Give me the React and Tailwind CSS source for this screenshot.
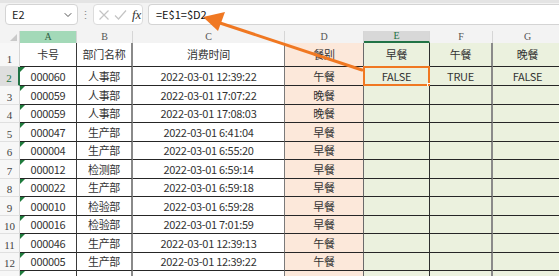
import { ChevronDown } from 'lucide-react';

const cols = [
  { key: 'a', w: 57, line: 'border-r border-r-[#3a3a3a]', bg: 'bg-white' },
  { key: 'b', w: 56, line: 'border-r-2 border-r-[#8a8a8a]', bg: 'bg-white' },
  { key: 'c', w: 152, line: 'border-r border-r-[#7a7a7a]', bg: 'bg-white' },
  { key: 'd', w: 79, line: 'border-r border-r-[#6a6a6a]', bg: 'bg-[#fce8da]' },
  { key: 'e', w: 66, line: 'border-r border-r-[#2e2e2e]', bg: 'bg-[#ebf1de]' },
  { key: 'f', w: 63, line: 'border-r-2 border-r-[#8a8a8a]', bg: 'bg-[#ebf1de]' },
  { key: 'g', w: 70, line: 'border-r border-r-[#8a8a8a]', bg: 'bg-[#ebf1de]' },
];

const letters = ['A', 'B', 'C', 'D', 'E', 'F', 'G'];

const head = ['卡号', '部门名称', '消费时间', '餐别', '早餐', '午餐', '晚餐'];

const rows = [
  ['000060', '人事部', '2022-03-01 12:39:22', '午餐', 'FALSE', 'TRUE', 'FALSE'],
  ['000059', '人事部', '2022-03-01 17:07:22', '晚餐', '', '', ''],
  ['000059', '人事部', '2022-03-01 17:08:03', '晚餐', '', '', ''],
  ['000047', '生产部', '2022-03-01 6:41:04', '早餐', '', '', ''],
  ['000004', '生产部', '2022-03-01 6:55:20', '早餐', '', '', ''],
  ['000012', '检测部', '2022-03-01 6:59:14', '早餐', '', '', ''],
  ['000022', '生产部', '2022-03-01 6:59:18', '早餐', '', '', ''],
  ['000010', '检验部', '2022-03-01 6:59:28', '早餐', '', '', ''],
  ['000016', '检验部', '2022-03-01 7:01:59', '早餐', '', '', ''],
  ['000046', '生产部', '2022-03-01 12:39:13', '午餐', '', '', ''],
  ['000005', '生产部', '2022-03-01 12:39:22', '午餐', '', '', ''],
  ['', '', '', '', '', '', ''],
];

const heights = [19, 19, 18, 19, 18, 19, 18, 19, 18, 19, 18, 19];

function Toolbar() {
  return (
    <div className="h-[31px] bg-[#f3f3f3] border-t-[3px] border-t-[#e4e4e4] flex items-start pt-[1px]">
      <div className="ml-[5px] w-[73px] h-[21px] bg-white border border-[#d4d4d4] rounded-[4px] flex items-center justify-between pl-[6px] pr-[3px]">
        <span className="text-[11px] text-[#222]">E2</span>
        <ChevronDown className="w-[12px] h-[12px] text-[#555]" strokeWidth={2} />
      </div>
      <div className="w-[15px] h-[21px] flex items-center justify-center text-[#8a8a8a] text-[11px]">⋮</div>
      <div className="w-[50px] h-[21px] bg-white border border-[#dcdcdc] rounded-[4px] flex items-center gap-[4px] pl-[4px]">
        <svg width="12" height="12" viewBox="0 0 12 12" className="text-[#c4c4c4]">
          <path d="M1.5 1.5 L10.5 10.5 M10.5 1.5 L1.5 10.5" stroke="currentColor" strokeWidth="1.2" fill="none" />
        </svg>
        <svg width="13" height="12" viewBox="0 0 13 12" className="text-[#c4c4c4]">
          <path d="M1 6.5 L4.5 10 L12 1.5" stroke="currentColor" strokeWidth="1.2" fill="none" />
        </svg>
        <span className="ml-[1px] text-[13px] italic text-[#333] leading-none" style={{ fontFamily: '"Liberation Serif", serif' }}>
          fx
        </span>
      </div>
      <div className="ml-[5px] flex-1 h-[21px] bg-white border border-[#d4d4d4] border-r-0 rounded-l-[4px] flex items-center pl-[7px]">
        <span className="text-[11px] text-[#111]">=E$1=$D2</span>
      </div>
    </div>
  );
}

function ColumnHeader() {
  return (
    <div className="flex h-[12px] bg-[#f3f3f3]">
      <div className="w-[20px] shrink-0 border-r border-[#d6d6d6] relative">
        <div className="absolute right-[2px] bottom-[2px] w-0 h-0 border-l-[7px] border-l-transparent border-b-[7px] border-b-[#c9c9c9]" />
      </div>
      {cols.map((c, i) => (
        <div
          key={c.key}
          style={{ width: c.w }}
          className={
            'shrink-0 flex items-center justify-center text-[10px] leading-none border-r border-[#d6d6d6] ' +
            (i === 0
              ? 'bg-[#a3d9b8] text-[#2f5f43]'
              : i === 4
              ? 'bg-[#d8d8d8] text-[#217346] border-b-2 border-b-[#217346]'
              : 'text-[#555]')
          }
        >
          <span style={{ fontFamily: '"Liberation Serif", serif' }}>{letters[i]}</span>
        </div>
      ))}
    </div>
  );
}

function Row({ num, h, cells, isHead, showNum = true }) {
  const active = num === 2;
  return (
    <div className="flex" style={{ height: h }}>
      <div
        className={
          'w-[20px] shrink-0 flex items-end justify-center pb-[1px] text-[11px] leading-none border-b border-[#e0e0e0] ' +
          (active ? 'bg-[#dedede] text-[#217346] border-r-2 border-r-[#217346]' : 'bg-[#f7f7f7] text-[#444] border-r border-r-[#d6d6d6]')
        }
        style={{ fontFamily: '"Liberation Serif", serif' }}
      >
        {showNum ? num : null}
      </div>
      {cols.map((c, i) => (
        <div
          key={c.key}
          style={{ width: c.w }}
          className={
            'shrink-0 relative flex items-center justify-center text-[11px] text-[#333] tracking-[-0.3px] border-b border-b-[#262626] ' +
            c.line +
            ' ' +
            c.bg
          }
        >
          {i === 0 && !isHead && (
            <div className="absolute left-0 top-0 w-0 h-0 border-t-[5px] border-t-[#1e7b3c] border-r-[5px] border-r-transparent" />
          )}
          {cells[i]}
          {active && i === 4 && (
            <div className="absolute left-[-1px] top-[-1px] right-[-1px] bottom-[-1px] border-2 border-[#f07822]">
              <div className="absolute right-[-4px] bottom-[-4px] w-[5px] h-[5px] bg-[#f07822] border border-white" />
            </div>
          )}
        </div>
      ))}
    </div>
  );
}

export default function App() {
  return (
    <div
      className="relative w-[559px] h-[276px] overflow-hidden bg-white"
      style={{ fontFamily: '"Noto Sans CJK SC", "Noto Sans", sans-serif' }}
    >
      <Toolbar />
      <ColumnHeader />
      <Row num={1} h={24} cells={head} isHead />
      {rows.map((r, i) => (
        <Row key={i} num={i + 2} h={heights[i]} cells={r} showNum={i < rows.length - 1} />
      ))}
      <svg className="absolute left-0 top-0 pointer-events-none" width="559" height="276" viewBox="0 0 559 276">
        <line x1="362" y1="70" x2="220" y2="23" stroke="#f07822" strokeWidth="3" strokeLinecap="round" />
        <polygon points="203,17 225,12 218,31" fill="#f07822" />
      </svg>
    </div>
  );
}
